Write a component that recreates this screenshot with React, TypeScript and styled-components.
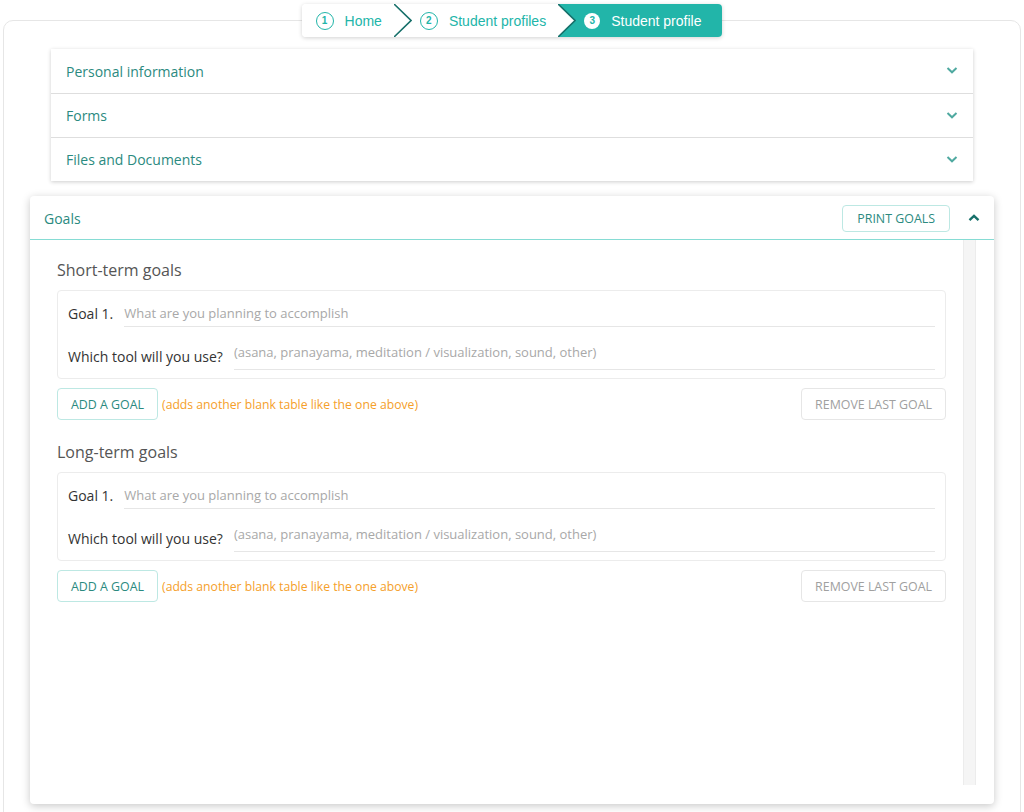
import React from 'react';
import styled, { createGlobalStyle } from 'styled-components';

const GlobalStyle = createGlobalStyle`
  html, body {
    margin: 0;
    padding: 0;
    background: #fff;
    font-family: "Open Sans", "Liberation Sans", sans-serif;
    overflow: hidden;
  }
`;

const TEAL = '#22b5a9';
const TEAL_TEXT = '#2b8a80';
const TEAL_DARK = '#17706a';

const Page = styled.div`
  padding: 4px 3px 0 3px;
  height: 812px;
  box-sizing: border-box;
`;

const CrumbRow = styled.div`
  display: flex;
  justify-content: center;
  position: relative;
  z-index: 2;
  margin-bottom: -17px;
`;

const Crumbs = styled.nav`
  display: flex;
  height: 33px;
  border-radius: 4px;
  background: #fff;
  box-shadow: 0 1px 4px rgba(0, 0, 0, 0.18);
  overflow: hidden;
  font-family: "Liberation Sans", Arial, sans-serif;
  font-size: 14px;
`;

const Crumb = styled.div<{ $active?: boolean; $first?: boolean; $last?: boolean }>`
  display: flex;
  align-items: center;
  gap: 11px;
  padding: 0 ${(p) => (p.$last ? '21px' : '12px')} 0 ${(p) => (p.$first ? '14px' : '8px')};
  background: ${(p) => (p.$active ? TEAL : '#fff')};
  color: ${(p) => (p.$active ? '#fff' : TEAL)};
`;

const StepNum = styled.span<{ $active?: boolean }>`
  display: inline-flex;
  align-items: center;
  justify-content: center;
  box-sizing: border-box;
  width: ${(p) => (p.$active ? '16px' : '18px')};
  height: ${(p) => (p.$active ? '16px' : '18px')};
  border-radius: 50%;
  border: ${(p) => (p.$active ? 'none' : `1.5px solid ${TEAL}`)};
  background: ${(p) => (p.$active ? '#fff' : 'transparent')};
  color: ${TEAL};
  font-size: 10px;
  font-weight: bold;
`;

const Card = styled.div`
  border: 1px solid #e6e6e6;
  border-radius: 10px;
  height: 900px;
  padding: 28px 0 0;
  box-sizing: border-box;
`;

const Accordion = styled.div`
  margin: 0 47px;
  background: #fff;
  box-shadow: 0 1px 4px rgba(0, 0, 0, 0.2);
`;

const AccRow = styled.div`
  display: flex;
  align-items: center;
  justify-content: space-between;
  box-sizing: border-box;
  height: 44px;
  padding: 0 15px;
  color: ${TEAL_TEXT};
  font-size: 14px;
  & + & {
    border-top: 1px solid #dedede;
  }
`;

const Panel = styled.section`
  margin: 15px 26px 0;
  background: #fff;
  border-radius: 4px;
  box-shadow: 0 2px 8px rgba(0, 0, 0, 0.22);
`;

const PanelHead = styled.div`
  display: flex;
  align-items: center;
  height: 43px;
  padding: 1px 14px 0;
  box-sizing: border-box;
  height: 44px;
  border-bottom: 1px solid #86dcd4;
  color: ${TEAL_TEXT};
  font-size: 14px;
`;

const PanelTitle = styled.div`
  flex: 1;
`;

const Button = styled.button<{ $muted?: boolean }>`
  font-family: "Open Sans", "Liberation Sans", sans-serif;
  font-size: 12.4px;
  text-transform: uppercase;
  background: #fff;
  border-radius: 4px;
  padding: 0 13px;
  height: 32px;
  cursor: pointer;
  color: ${(p) => (p.$muted ? '#a0a0a0' : TEAL_TEXT)};
  border: 1px solid ${(p) => (p.$muted ? '#e6e6e6' : '#bde8e3')};
`;

const PrintButton = styled(Button)`
  height: 27px;
  padding: 0 14px;
  margin-right: 18px;
`;

const PanelBody = styled.div`
  display: flex;
  height: 564px;
  padding: 0 18px 19px 0;
  box-sizing: border-box;
`;

const Content = styled.div`
  flex: 1;
  padding: 18px 17px 0 27px;
`;

const Track = styled.div`
  width: 11px;
  background: #f5f5f5;
  border-left: 1px solid #ececec;
  border-right: 1px solid #ececec;
`;

const SectionTitle = styled.h3`
  margin: 0 0 8px;
  font-weight: normal;
  font-size: 16px;
  line-height: 24px;
  color: #555;
  & ~ & {
    margin-top: 20px;
  }
`;

const GoalTable = styled.div`
  border: 1px solid #ececec;
  border-radius: 4px;
  padding: 8px 10px 8px;
`;

const Field = styled.div<{ $spaced?: boolean }>`
  display: flex;
  align-items: flex-end;
  gap: 11px;
  margin-top: ${(p) => (p.$spaced ? '7px' : '0')};
`;

const Label = styled.label`
  font-size: 14px;
  line-height: 20px;
  color: #333;
  white-space: nowrap;
  padding-bottom: 3px;
`;

const Input = styled.input<{ $tall?: boolean }>`
  flex: 1;
  height: ${(p) => (p.$tall ? '36px' : '28px')};
  box-sizing: border-box;
  border: none;
  border-bottom: 1px solid #e6e6e6;
  outline: none;
  padding: 0;
  font-family: "Open Sans", "Liberation Sans", sans-serif;
  font-size: 13px;
  color: #333;
  &::placeholder {
    color: #a8a8a8;
  }
`;

const Actions = styled.div`
  display: flex;
  align-items: center;
  margin-top: 9px;
`;

const Hint = styled.span`
  flex: 1;
  margin-left: 4px;
  color: #f5a02a;
  font-size: 12.2px;
`;

function Chevron({ up, color, size = 12 }: { up?: boolean; color: string; size?: number }) {
  return (
    <svg width={size} height={size * 0.6} viewBox="0 0 12 7" fill="none">
      <path
        d={up ? 'M1.5 6L6 1.8 10.5 6' : 'M1.5 1L6 5.2 10.5 1'}
        stroke={color}
        strokeWidth={up ? 2.4 : 2}
      />
    </svg>
  );
}

function Separator({ fill }: { fill?: boolean }) {
  return (
    <svg width="18" height="33" viewBox="0 0 18 33" style={{ flex: 'none', background: '#fff' }}>
      {fill && <polygon points="0,0 18,0 18,33 0,33 17,16.5" fill={TEAL} />}
      <polyline points="0,0 17,16.5 0,33" fill="none" stroke={TEAL_DARK} strokeWidth="1.6" />
    </svg>
  );
}

function GoalBlock({ title }: { title: string }) {
  return (
    <>
      <SectionTitle>{title}</SectionTitle>
      <GoalTable>
        <Field>
          <Label>Goal 1.</Label>
          <Input placeholder="What are you planning to accomplish" />
        </Field>
        <Field $spaced>
          <Label>Which tool will you use?</Label>
          <Input $tall placeholder="(asana, pranayama, meditation / visualization, sound, other)" />
        </Field>
      </GoalTable>
      <Actions>
        <Button>Add a goal</Button>
        <Hint>(adds another blank table like the one above)</Hint>
        <Button $muted>Remove last goal</Button>
      </Actions>
    </>
  );
}

export default function App() {
  const sections = ['Personal information', 'Forms', 'Files and Documents'];
  return (
    <Page>
      <GlobalStyle />
      <CrumbRow>
        <Crumbs>
          <Crumb $first>
            <StepNum>1</StepNum>Home
          </Crumb>
          <Separator />
          <Crumb>
            <StepNum>2</StepNum>Student profiles
          </Crumb>
          <Separator fill />
          <Crumb $active $last>
            <StepNum $active>3</StepNum>Student profile
          </Crumb>
        </Crumbs>
      </CrumbRow>
      <Card>
        <Accordion>
          {sections.map((s) => (
            <AccRow key={s}>
              {s}
              <Chevron color="#4fa9a0" />
            </AccRow>
          ))}
        </Accordion>
        <Panel>
          <PanelHead>
            <PanelTitle>Goals</PanelTitle>
            <PrintButton>Print goals</PrintButton>
            <Chevron up color={TEAL_DARK} />
          </PanelHead>
          <PanelBody>
            <Content>
              <GoalBlock title="Short-term goals" />
              <GoalBlock title="Long-term goals" />
            </Content>
            <Track />
          </PanelBody>
        </Panel>
      </Card>
    </Page>
  );
}
